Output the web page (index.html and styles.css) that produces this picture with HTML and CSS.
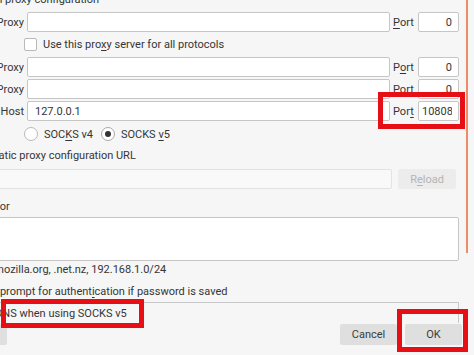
FILE: index.html
```html
<!DOCTYPE html>
<html lang="en">
<head>
    <meta charset="UTF-8">
    <title>Connection Settings</title>
    <link rel="stylesheet" href="styles.css">
</head>
<body>
    <div class="dialog">
        <div class="option-row">
            <span class="radio checked"></span>
            <span>Manual proxy configuration</span>
        </div>

        <div class="proxy-grid">
            <label class="field-label">HTTP Proxy</label>
            <input class="text-input" type="text">
            <label class="port-label"><u>P</u>ort</label>
            <input class="text-input port-input" type="text" value="0">

            <div class="option-row sub-row check-row">
                <span class="checkbox"></span>
                <span>Use this pro<u>x</u>y server for all protocols</span>
            </div>

            <label class="field-label">SSL Proxy</label>
            <input class="text-input" type="text">
            <label class="port-label">P<u>o</u>rt</label>
            <input class="text-input port-input" type="text" value="0">

            <label class="field-label">FTP Proxy</label>
            <input class="text-input" type="text">
            <label class="port-label">Po<u>r</u>t</label>
            <input class="text-input port-input" type="text" value="0">

            <label class="field-label">SOCKS Host</label>
            <input class="text-input" type="text" value="127.0.0.1">
            <label class="port-label">Por<u>t</u></label>
            <input class="text-input port-input" type="text" value="10808">

            <div class="option-row sub-row socks-row">
                <span class="option"><span class="radio"></span><span>SOC<u>K</u>S v4</span></span>
                <span class="option"><span class="radio checked"></span><span>SOCKS <u>v</u>5</span></span>
            </div>
        </div>

        <div class="option-row">
            <span class="radio"></span>
            <span>Automatic proxy configuration URL</span>
        </div>
        <div class="url-row">
            <input class="text-input url-input" type="text" disabled>
            <button class="reload-button" disabled>R<u>e</u>load</button>
        </div>

        <div class="plain-label">No Proxy for</div>
        <textarea class="no-proxy"></textarea>
        <div class="example">Example: .mozilla.org, .net.nz, 192.168.1.0/24</div>

        <div class="option-row prompt-row">
            <span class="checkbox"></span>
            <span>Do not prompt for authent<u>i</u>cation if password is saved</span>
        </div>

        <div class="dns-box">
            <div class="option-row">
                <span class="checkbox"></span>
                <span>Proxy DNS when using SOCKS v5</span>
            </div>
        </div>

        <div class="dialog-buttons">
            <button class="dialog-button help-button">Help</button>
            <div class="button-group">
                <button class="dialog-button cancel-button">Cancel</button>
                <button class="dialog-button ok-button">OK</button>
            </div>
        </div>
    </div>

    <div class="scrollbar"></div>
    <div class="highlight socks-port-mark"></div>
    <div class="highlight dns-mark"></div>
    <div class="highlight ok-mark"></div>
</body>
</html>
```

FILE: styles.css
```css
* {
    margin: 0;
    padding: 0;
    box-sizing: border-box;
}

body {
    font-family: Roboto, "Noto Sans", sans-serif;
    font-size: 11px;
    color: #353535;
    background-color: #f6f6f6;
    width: 474px;
    height: 355px;
    overflow: hidden;
    position: relative;
}

u {
    text-decoration-thickness: 1px;
    text-underline-offset: 2px;
}

.dialog {
    margin: -11px 0 0 -55px;
    width: 514px;
    display: flex;
    flex-direction: column;
}

.option-row {
    display: flex;
    align-items: center;
    gap: 7px;
    height: 20px;
    white-space: nowrap;
}

.radio {
    width: 14px;
    height: 14px;
    border: 1px solid #b9b9b9;
    border-radius: 50%;
    background: #ffffff;
    flex-shrink: 0;
    display: flex;
    align-items: center;
    justify-content: center;
}

.radio.checked {
    border-color: #a8a8a8;
}

.radio.checked::after {
    content: '';
    width: 6px;
    height: 6px;
    border-radius: 50%;
    background: #333333;
}

.checkbox {
    width: 13px;
    height: 13px;
    border: 1px solid #b9b9b9;
    border-radius: 2px;
    background: #ffffff;
    flex-shrink: 0;
}

.proxy-grid {
    display: grid;
    grid-template-columns: 79px 363px 22px 41px;
    column-gap: 3px;
    row-gap: 2px;
    margin-top: 3px;
    align-items: center;
}

.field-label {
    text-align: right;
    white-space: nowrap;
}

.port-label {
    white-space: nowrap;
}

.text-input {
    height: 20px;
    border: 1px solid #c6c6c6;
    border-radius: 2px;
    background: #ffffff;
    font: inherit;
    color: inherit;
    padding: 0 7px;
    outline: none;
    width: 100%;
}

.port-input {
    text-align: right;
    padding: 0 6px 0 3px;
}

.sub-row {
    grid-column: 2 / -1;
    margin-left: -3px;
}

.check-row {
    height: 21px;
    gap: 6px;
}

.socks-row {
    height: 22px;
    gap: 8px;
}

.option {
    display: flex;
    align-items: center;
    gap: 6px;
}

.url-row {
    display: flex;
    gap: 6px;
    margin-top: 4px;
    padding-left: 21px;
    padding-right: 3px;
}

.url-input {
    flex-grow: 1;
    background: #f9f9f9;
    border-color: #e2e2e2;
}

.reload-button {
    width: 67px;
    height: 20px;
    border: none;
    border-radius: 2px;
    background: #ececec;
    color: #b4b4b4;
    font: inherit;
}

.plain-label {
    margin-top: 8px;
    margin-left: 4px;
    height: 20px;
    line-height: 20px;
}

.no-proxy {
    height: 44px;
    width: 100%;
    border: 1px solid #c6c6c6;
    border-radius: 2px;
    background: #ffffff;
    resize: none;
}

.example {
    height: 18px;
    line-height: 18px;
    margin-left: -1px;
    white-space: nowrap;
}

.prompt-row {
    margin-top: 2px;
}

.dns-box {
    margin-top: 1px;
    height: 21px;
    border-top: 1px solid #c8c8c8;
    border-right: 1px solid #c8c8c8;
}

.dialog-buttons {
    display: flex;
    justify-content: space-between;
    margin-top: 1px;
    margin-right: -3px;
    padding-left: 2px;
}

.button-group {
    display: flex;
    gap: 8px;
}

.dialog-button {
    height: 21px;
    border: none;
    border-radius: 2px;
    background: #dfdfdf;
    color: #3c3c3c;
    font: inherit;
}

.help-button {
    width: 60px;
}

.cancel-button {
    width: 57px;
}

.ok-button {
    width: 57px;
}

.scrollbar {
    position: absolute;
    left: 466px;
    top: 0;
    width: 2px;
    height: 253px;
    background: #ee8c69;
}

.highlight {
    position: absolute;
    border: 5px solid #e50f15;
}

.socks-port-mark {
    left: 378px;
    top: 92px;
    width: 87px;
    height: 37px;
}

.dns-mark {
    left: 1px;
    top: 299px;
    width: 143px;
    height: 29px;
}

.ok-mark {
    left: 397px;
    top: 309px;
    width: 71px;
    height: 43px;
}
```
